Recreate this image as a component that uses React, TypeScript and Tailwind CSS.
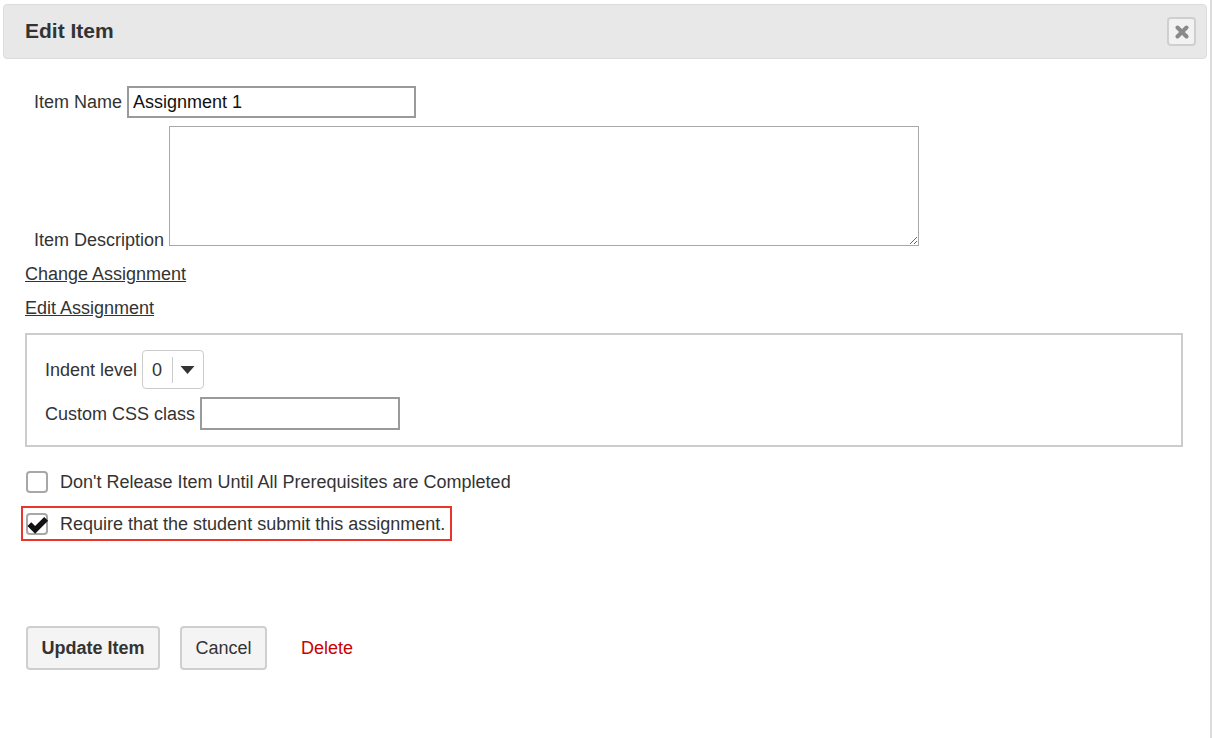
import React from "react";

const font = { fontFamily: '"Liberation Sans", Arial, sans-serif' };

const CheckBox = ({ checked }: { checked?: boolean }) => (
  <span className="relative inline-block w-[22px] h-[22px] rounded-[4px] border-2 border-[#a8a8a8] bg-white shrink-0">
    {checked && (
      <svg
        viewBox="0 0 24 24"
        className="absolute left-[-2px] top-[-1px] w-[23px] h-[23px]"
      >
        <path
          d="M1.5 12.5 L5.5 8.5 L9.5 12.5 L19 3 L23 7 L9.5 20.5 Z"
          fill="#111"
        />
      </svg>
    )}
  </span>
);

export default function App() {
  return (
    <div
      className="w-[1212px] h-[738px] bg-white border-r-2 border-[#dcdcdc] text-[#333] text-[18px] leading-[20px] overflow-hidden"
      style={font}
    >
      {/* Header */}
      <div className="mx-[3px] mt-[4px] h-[55px] rounded-[4px] border border-[#dcdcdc] bg-[#e8e8e8] flex items-center justify-between pl-[21px] pr-[10px]">
        <h1 className="text-[21px] font-bold text-[#333] mt-[-2px]">Edit Item</h1>
        <button className="w-[29px] h-[29px] rounded-[4px] border-2 border-[#cfcfcf] bg-[#f2f2f2] flex items-center justify-center">
          <svg viewBox="0 0 14 14" className="w-[14px] h-[14px]">
            <path d="M2.5 2.5 L11.5 11.5 M11.5 2.5 L2.5 11.5" stroke="#8a8a8a" strokeWidth="4" strokeLinecap="round" />
          </svg>
        </button>
      </div>

      {/* Form */}
      <div className="pl-[34px] mt-[27px] flex items-center">
        <label>Item Name</label>
        <input
          defaultValue="Assignment 1"
          className="ml-[5px] w-[289px] h-[32px] border-2 border-[#9a9a9a] px-[4px] text-[18px] text-[#111] outline-none"
          style={font}
        />
      </div>

      <div className="pl-[34px] mt-[8px] flex items-end">
        <label className="mb-[-4px]">Item Description</label>
        <textarea className="ml-[5px] w-[750px] h-[120px] border border-[#a9a9a9] outline-none" />
      </div>

      <div className="pl-[25px] mt-[18px] flex flex-col gap-[14px]">
        <a href="#" className="underline text-[#333] leading-[20px]">Change Assignment</a>
        <a href="#" className="underline text-[#333] leading-[20px]">Edit Assignment</a>
      </div>

      {/* Options box */}
      <div className="ml-[25px] mt-[15px] w-[1158px] h-[114px] border-2 border-[#cccccc] pl-[18px] pt-[15px]">
        <div className="flex items-center">
          <span>Indent level</span>
          <div className="ml-[5px] w-[62px] h-[39px] rounded-[4px] border border-[#cccccc] flex items-center">
            <span className="pl-[9px] w-[29px]">0</span>
            <span className="w-px h-[26px] bg-[#cccccc]" />
            <svg viewBox="0 0 14 8" className="ml-[7px] w-[15px] h-[8px]">
              <path d="M0 0 L14 0 L7 8 Z" fill="#333" />
            </svg>
          </div>
        </div>
        <div className="flex items-center mt-[8px]">
          <span>Custom CSS class</span>
          <input className="ml-[5px] w-[200px] h-[33px] border-2 border-[#9a9a9a] outline-none" />
        </div>
      </div>

      {/* Checkboxes */}
      <div className="ml-[26px] mt-[24px] flex items-center gap-[12px]">
        <CheckBox />
        <span>Don't Release Item Until All Prerequisites are Completed</span>
      </div>

      <div className="ml-[21px] mt-[13px] w-[431px] h-[35px] border-2 border-[#e8362b] flex items-center pl-[3px] gap-[12px]">
        <CheckBox checked />
        <span>Require that the student submit this assignment.</span>
      </div>

      {/* Buttons */}
      <div className="ml-[26px] mt-[85px] flex items-center">
        <button className="w-[134px] h-[44px] rounded-[4px] border-2 border-[#cfcfcf] bg-[#f4f4f4] font-bold text-[#333]">
          Update Item
        </button>
        <button className="ml-[20px] w-[87px] h-[44px] rounded-[4px] border-2 border-[#cfcfcf] bg-[#f4f4f4] text-[#333]">
          Cancel
        </button>
        <a href="#" className="ml-[34px] text-[#cc0000]">Delete</a>
      </div>
    </div>
  );
}
